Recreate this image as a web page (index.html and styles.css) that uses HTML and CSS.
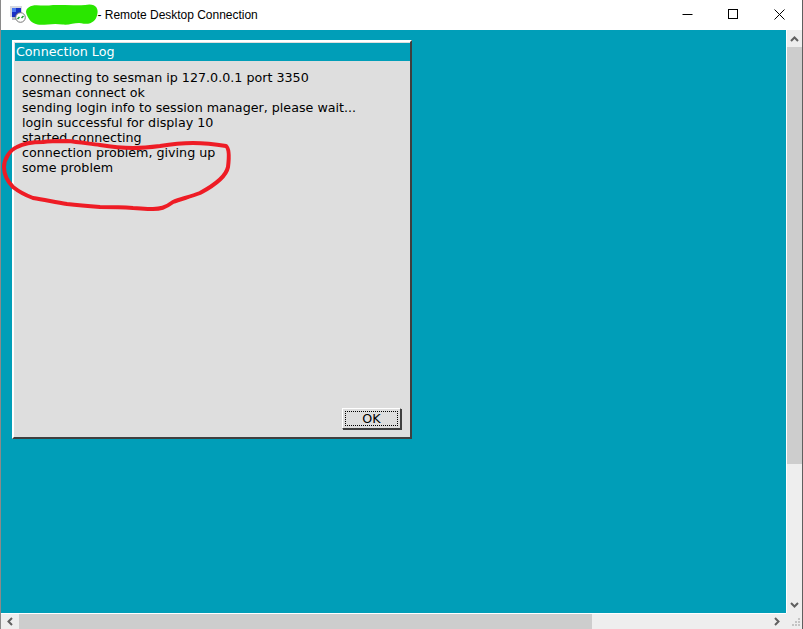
FILE: index.html
```html
<!DOCTYPE html>
<html lang="en">
<head>
<meta charset="utf-8">
<title>Remote Desktop Connection</title>
<link rel="stylesheet" href="styles.css">
</head>
<body>
<div class="window">
  <header class="titlebar">
    <svg class="app-icon" width="16" height="17" viewBox="0 0 16 17">
      <rect x="0" y="0" width="12" height="11" fill="#d5d8e0"/>
      <rect x="2" y="2" width="9" height="9" fill="#1a2fc4"/>
      <rect x="2" y="2" width="4" height="4" fill="#4a78f0"/>
      <rect x="2" y="11" width="8" height="3" fill="#b9bcc4"/>
      <circle cx="10.500" cy="11.500" r="4.800" fill="#fff" stroke="#777"/>
      <path d="M7.500 13l2-2M11.500 12l2-2" stroke="#1c9a2c" stroke-width="1.500"/>
    </svg>
    <span class="title">- Remote Desktop Connection</span>
    <svg class="blob" width="73" height="23" viewBox="0 0 76 23">
      <path d="M3 4C8 0 16 3 24 2C36 1 50 3 66 1C73 1 76 6 74 12C73 18 68 22 60 21C52 19 46 23 38 22C28 20 20 23 12 22C5 21 1 14 0 9C0 7 1 5 3 4Z" fill="#2ae600"/>
    </svg>
    <div class="controls">
      <svg width="11" height="11" viewBox="0 0 11 11"><path d="M0.500 5.500H10.500" stroke="#000"/></svg>
      <svg width="11" height="11" viewBox="0 0 11 11"><rect x="0.500" y="0.500" width="9" height="9" fill="none" stroke="#000"/></svg>
      <svg width="11" height="11" viewBox="0 0 11 11"><path d="M0.500 0.500L10.500 10.500M10.500 0.500L0.500 10.500" stroke="#000"/></svg>
    </div>
  </header>
  <div class="viewport">
    <div class="desktop">
      <section class="dialog">
        <h1 class="dialog-title">Connection Log</h1>
        <div class="log">
          <p>connecting to sesman ip 127.0.0.1 port 3350</p>
          <p>sesman connect ok</p>
          <p>sending login info to session manager, please wait...</p>
          <p>login successful for display 10</p>
          <p>started connecting</p>
          <p>connection problem, giving up</p>
          <p>some problem</p>
        </div>
        <div class="dialog-footer">
          <button class="ok" type="button"><span class="ok-focus">OK</span></button>
        </div>
      </section>
      <svg class="scribble" width="240" height="80" viewBox="0 0 240 80">
        <path d="M226 11C230 14 229 24 228 32C226 42 215 50 200 58C190 62 180 64 173 67C165 73 160 74 153 74C145 74 138 73 133 73C120 72 110 72 100 72C85 71 75 70 67 69C55 67 45 65 33 63C25 60 18 56 13 52C8 47 4 40 4 32C4 24 10 15 17 12C24 8 35 7 43 7C50 6 58 6 67 6C80 7 90 9 100 10C112 12 122 13 133 13C143 13 152 12 160 11C172 9 182 8 193 8C204 8 214 9 226 11" fill="none" stroke="#ee1c25" stroke-width="4" stroke-linecap="round"/>
      </svg>
    </div>
    <div class="vscroll">
      <div class="sb-btn"><svg width="9" height="6" viewBox="0 0 9 6"><path d="M1 5L4.500 1.500L8 5" fill="none" stroke="#606060" stroke-width="2"/></svg></div>
      <div class="vthumb"></div>
      <div class="sb-rest"></div>
      <div class="sb-btn"><svg width="9" height="6" viewBox="0 0 9 6"><path d="M1 1L4.500 4.500L8 1" fill="none" stroke="#606060" stroke-width="2"/></svg></div>
    </div>
    <div class="hscroll">
      <div class="sb-btn-h"><svg width="6" height="9" viewBox="0 0 6 9"><path d="M5 1L1.500 4.500L5 8" fill="none" stroke="#606060" stroke-width="2"/></svg></div>
      <div class="hthumb"></div>
      <div class="sb-rest"></div>
      <div class="sb-btn-h"><svg width="6" height="9" viewBox="0 0 6 9"><path d="M1 1L4.500 4.500L1 8" fill="none" stroke="#606060" stroke-width="2"/></svg></div>
    </div>
    <div class="corner">
      <svg width="11" height="11" viewBox="0 0 11 11"><path d="M8 1h2v2H8zM5 4h2v2H5zM8 4h2v2H8zM2 7h2v2H2zM5 7h2v2H5zM8 7h2v2H8z" fill="#c4c4c4"/></svg>
    </div>
  </div>
</div>
</body>
</html>
```
FILE: styles.css
```css
* { box-sizing: border-box; }
html, body { margin: 0; padding: 0; background: #fff; }
body { width: 803px; height: 629px; overflow: hidden; }
.window {
  width: 803px; height: 629px;
  display: flex; flex-direction: column;
  border-left: 1px solid #8a8a8a;
  border-right: 1px solid #5f5f5f;
}
.titlebar {
  height: 30px; flex: none;
  display: flex; align-items: center;
  padding-left: 9px;
  position: relative;
  background: #fff;
  font: 12px "Liberation Sans", Arial, sans-serif;
  color: #000;
}
.app-icon { flex: none; margin-top: -1px; }
.title { margin-left: 71.5px; white-space: nowrap; letter-spacing: -0.02px; }
.blob { position: absolute; left: 25px; top: 3px; }
.controls { margin-left: auto; display: flex; gap: 35px; padding-right: 17px; margin-top: -1px; }
.controls svg { display: block; }
.viewport {
  flex: 1; min-height: 0;
  display: grid;
  grid-template-columns: 785px 16px;
  grid-template-rows: 583px 16px;
}
.desktop { background: #009eb8; padding: 10px 11px; position: relative; }
.dialog {
  width: 400px; height: 399px;
  background: #dedede;
  display: flex; flex-direction: column;
  border: 2px solid;
  border-color: #fff #3f3f3f #3f3f3f #fff;
  padding: 0 0 1px 1px;
}
.dialog-title {
  margin: 1px 0 0;
  height: 18px;
  background: #009eb8; color: #fff;
  font: 400 12.7px/18px "DejaVu Sans", sans-serif;
  padding-left: 1px;
}
.log {
  flex: 1;
  padding: 9px 0 0 7px;
  font: 12.7px/15px "DejaVu Sans", sans-serif;
  color: #000;
}
.log p { margin: 0; white-space: nowrap; }
.dialog-footer { display: flex; justify-content: flex-end; padding: 0 9px 7px 0; }
.ok {
  width: 59px; height: 21px;
  padding: 2px;
  background: #dedede;
  border: 1px solid;
  border-color: #fff #3f3f3f #3f3f3f #fff;
  box-shadow: 1px 1px 0 #3f3f3f;
  font: 12.7px "DejaVu Sans", sans-serif;
  color: #000;
}
.ok-focus {
  display: block; height: 100%;
  border: 1px dotted #000;
  line-height: 14px;
}
.scribble { position: absolute; left: -1px; top: 105px; pointer-events: none; }
.vscroll { background: #eeeeee; display: flex; flex-direction: column; border-left: 1px solid #fff; }
.hscroll { background: #eeeeee; display: flex; border-top: 1px solid #fff; }
.sb-btn { height: 17px; flex: none; display: flex; align-items: center; justify-content: center; }
.sb-btn-h { width: 18px; flex: none; display: flex; align-items: center; justify-content: center; }
.vthumb { height: 417px; background: #cdcdcd; flex: none; }
.hthumb { width: 573px; background: #cdcdcd; flex: none; }
.sb-rest { flex: 1; }
.corner { background: #eeeeee; display: flex; align-items: flex-end; justify-content: flex-end; padding: 0 1px 1px 0; }
.corner svg { display: block; }
```
